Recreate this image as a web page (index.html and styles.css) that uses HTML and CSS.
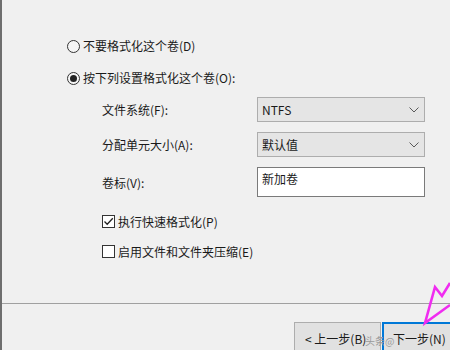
FILE: index.html
```html
<!DOCTYPE html>
<html lang="zh-CN">
<head>
  <meta charset="UTF-8">
  <title>格式化分区</title>
  <link rel="stylesheet" href="styles.css">
</head>
<body>
  <div class="wizard">
    <div class="page">
      <label class="option first">
        <span class="radio"></span>
        <span>不要格式化这个卷(D)</span>
      </label>
      <label class="option second">
        <span class="radio checked"></span>
        <span>按下列设置格式化这个卷(O):</span>
      </label>

      <div class="fields">
        <div class="field-label">文件系统(F):</div>
        <div class="select">
          <span>NTFS</span>
          <svg width="10" height="6" viewBox="0 0 10 6"><path d="M0.5 0.5 L5 5 L9.5 0.5" fill="none" stroke="#5a5a5a" stroke-width="1"/></svg>
        </div>

        <div class="field-label">分配单元大小(A):</div>
        <div class="select">
          <span>默认值</span>
          <svg width="10" height="6" viewBox="0 0 10 6"><path d="M0.5 0.5 L5 5 L9.5 0.5" fill="none" stroke="#5a5a5a" stroke-width="1"/></svg>
        </div>

        <div class="field-label label-top">卷标(V):</div>
        <div class="textbox">新加卷</div>
      </div>

      <label class="check first-check">
        <span class="box">
          <svg width="11" height="11" viewBox="0 0 11 11"><path d="M1.5 5.5 L4.2 8.3 L9.8 2.2" fill="none" stroke="#222" stroke-width="1.3"/></svg>
        </span>
        <span>执行快速格式化(P)</span>
      </label>
      <label class="check">
        <span class="box"></span>
        <span>启用文件和文件夹压缩(E)</span>
      </label>
    </div>

    <div class="footer">
      <button class="btn">&lt; 上一步(B)</button>
      <button class="btn primary">下一步(N)</button>
      <span class="watermark">头条@</span>
      <svg class="arrow" width="40" height="50" viewBox="0 0 40 50">
        <path d="M40 4 L32 17 L25 8 L15 44 L40 26" fill="none" stroke="#f02cf0" stroke-width="2.6" stroke-linejoin="miter"/>
      </svg>
    </div>
  </div>
</body>
</html>
```

FILE: styles.css
```css
html, body {
  margin: 0;
  padding: 0;
  height: 100%;
}
body {
  background-color: #f0f0f0;
  font-family: "Noto Sans CJK SC", "Microsoft YaHei", sans-serif;
  font-size: 12px;
  color: #1a1a1a;
  overflow: hidden;
}
.wizard {
  height: 350px;
  border-left: 2px solid #6e6e6e;
  display: flex;
  flex-direction: column;
}
.page {
  height: 303px;
  flex-shrink: 0;
  padding-left: 65px;
  border-bottom: 1px solid #a0a0a0;
}
.option {
  display: flex;
  align-items: center;
  height: 16px;
  line-height: 16px;
}
.option.first {
  margin-top: 38px;
}
.option.second {
  margin-top: 16px;
}
.radio {
  width: 11px;
  height: 11px;
  border: 1px solid #333;
  border-radius: 50%;
  margin-right: 3px;
  position: relative;
  background: #f5f5f5;
}
.radio.checked::after {
  content: "";
  position: absolute;
  left: 2px;
  top: 2px;
  width: 7px;
  height: 7px;
  border-radius: 50%;
  background: #222;
}
.fields {
  display: grid;
  grid-template-columns: 155px 168px;
  grid-template-rows: 25px 25px 30px;
  row-gap: 10px;
  margin-top: 11px;
  margin-left: 35px;
}
.field-label {
  display: flex;
  align-items: center;
}
.field-label.label-top {
  align-items: flex-start;
  padding-top: 7px;
}
.select {
  box-sizing: border-box;
  background-color: #e5e5e5;
  border: 1px solid #adadad;
  display: flex;
  align-items: center;
  justify-content: space-between;
  padding: 0 5px 0 4px;
}
.textbox {
  box-sizing: border-box;
  background: #fff;
  border: 1px solid #7a7a7a;
  padding: 2px 4px;
  line-height: 18px;
}
.check {
  display: flex;
  align-items: center;
  height: 16px;
  margin-left: 35px;
  margin-top: 14px;
}
.check.first-check {
  margin-top: 16px;
}
.box {
  box-sizing: border-box;
  width: 13px;
  height: 13px;
  border: 1px solid #333;
  background: #fff;
  margin-right: 3px;
  display: flex;
  align-items: center;
  justify-content: center;
}
.footer {
  position: relative;
  flex: 1;
  display: flex;
  justify-content: flex-end;
  align-items: flex-start;
  padding-top: 18px;
  margin-right: -4px;
}
.btn {
  font-family: inherit;
  font-size: 12px;
  color: #1a1a1a;
  background: #e1e1e1;
  border: 1px solid #adadad;
  height: 32px;
  padding: 0 0 0 10px;
  text-align: left;
  width: 87px;
  margin-left: 1px;
}
.btn.primary {
  border: 2px solid #0078d7;
  width: 72px;
  padding-left: 9px;
}
.watermark {
  position: absolute;
  left: 363px;
  top: 29px;
  color: #9a9a9a;
  font-size: 10px;
}
.arrow {
  position: absolute;
  right: 4px;
  top: -25px;
}
```
